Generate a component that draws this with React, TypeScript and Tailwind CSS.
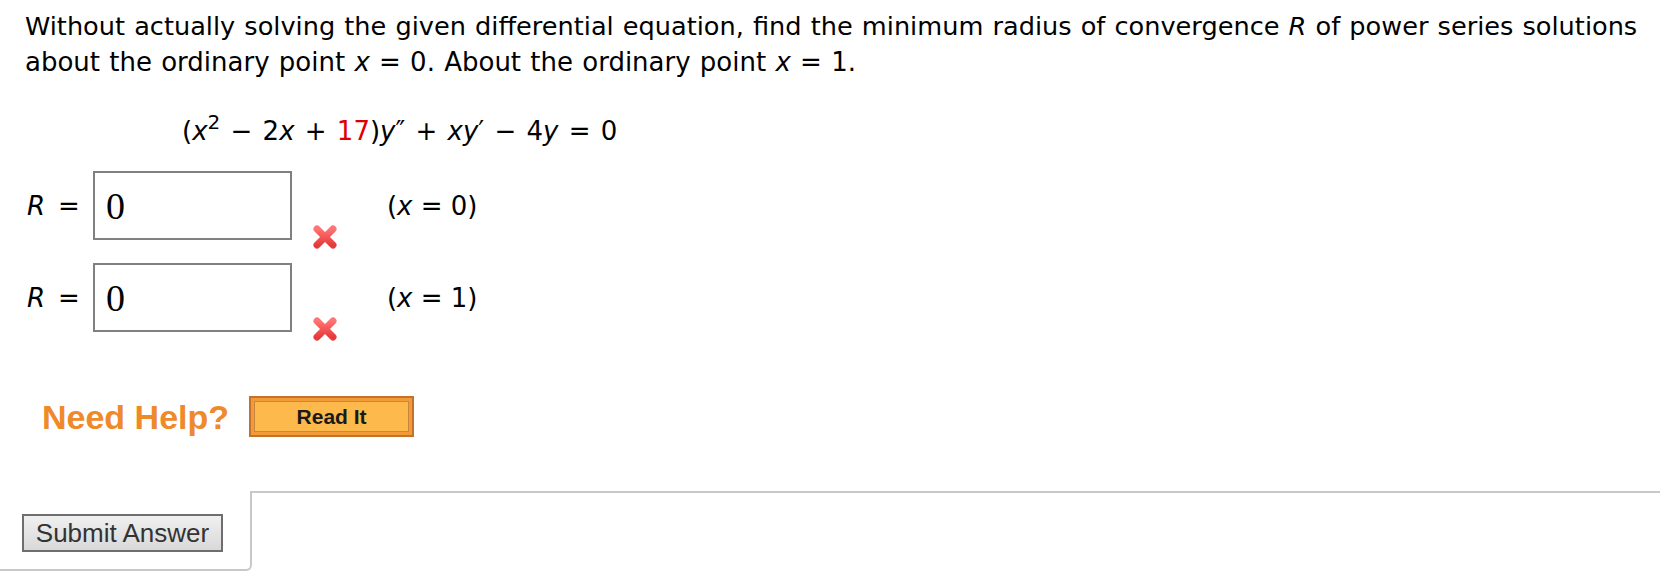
import React from "react";

const XMark = ({ id }: { id: string }) => (
  <svg width="26" height="26" viewBox="0 0 26 26">
    <defs>
      <linearGradient id={id} x1="0" y1="0" x2="0" y2="1">
        <stop offset="0" stopColor="#ff7474" />
        <stop offset="1" stopColor="#e63b3b" />
      </linearGradient>
    </defs>
    <path
      d="M5 5 L21 21 M21 5 L5 21"
      stroke={`url(#${id})`}
      strokeWidth="7"
      strokeLinecap="round"
      fill="none"
    />
  </svg>
);

const AnswerRow = ({ point, xid }: { point: string; xid: string }) => (
  <div className="flex items-center h-[69px] pl-[27px]">
    <span className="italic">R</span>
    <span className="ml-[13px]">=</span>
    <div className="ml-[13px] w-[199px] h-[69px] border-2 border-[#808080] bg-white flex items-center pl-[11px]">
      <span className="font-['Liberation_Serif',serif] text-[38px] leading-none text-black">0</span>
    </div>
    <div className="self-end -mb-[10px] ml-[20px]">
      <XMark id={xid} />
    </div>
    <span className="ml-[49px]">
      (<span className="italic">x</span> = {point})
    </span>
  </div>
);

export default function App() {
  return (
    <div className="w-[1660px] h-[580px] bg-white text-black overflow-hidden font-['Verdana','DejaVu_Sans',sans-serif] text-[26px] leading-[36px]">
      <p className="pl-[25px] pt-[8px] whitespace-nowrap [word-spacing:1px]">
        <span className="text-[25.6px]">
          Without actually solving the given differential equation, find the minimum radius of convergence{" "}
          <span className="italic">R</span> of power series solutions
        </span>
        <br />
        about the ordinary point <span className="italic">x</span> = 0. About the ordinary point{" "}
        <span className="italic">x</span> = 1.
      </p>

      <div className="mt-[33px] pl-[182px] whitespace-nowrap [word-spacing:2px]">
        (<span className="italic">x</span>
        <span className="text-[20px] relative -top-[11px] align-baseline">2</span> − 2
        <span className="italic">x</span> + <span className="text-[#e00000]">17</span>)
        <span className="italic">y</span>″ + <span className="italic">xy</span>′ − 4
        <span className="italic">y</span> = 0
      </div>

      <div className="mt-[20px] flex flex-col gap-[23px]">
        <AnswerRow point="0" xid="xg1" />
        <AnswerRow point="1" xid="xg2" />
      </div>

      <div className="mt-[64px] flex items-center pl-[42px]">
        <span className="font-['Liberation_Sans',Arial,sans-serif] font-bold text-[34px] leading-none text-[#ee8a2a]">
          Need Help?
        </span>
        <button className="ml-[20px] w-[165px] h-[41px] border-2 border-[#c2722b] bg-[#f39a38] p-[3px] flex">
          <span className="flex-1 border border-[#c98640] bg-[#fdb94b] flex items-center justify-center font-['Liberation_Sans',Arial,sans-serif] font-bold text-[21px] leading-none text-[#1a1a1a]">
            Read It
          </span>
        </button>
      </div>

      <div className="mt-[54px] flex">
        <div className="w-[252px] h-[80px] border-r-2 border-b-2 border-[#c8c8c8] rounded-br-[6px] pl-[22px] pt-[23px]">
          <button className="w-[201px] h-[38px] border-2 border-[#6e6e6e] bg-gradient-to-b from-[#f0f0f0] to-[#d9d9d9] font-['Liberation_Sans',Arial,sans-serif] text-[26px] leading-none text-[#333]">
            Submit Answer
          </button>
        </div>
        <div className="flex-1 border-t-2 border-[#c8c8c8]" />
      </div>
    </div>
  );
}
